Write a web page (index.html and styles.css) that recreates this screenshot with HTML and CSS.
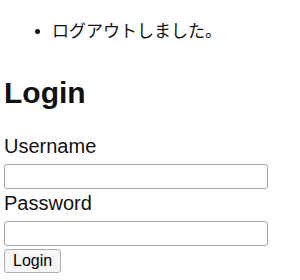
FILE: index.html
```html
<!DOCTYPE html>
<html lang="ja">
<head>
    <meta charset="UTF-8">
    <meta name="viewport" content="width=device-width, initial-scale=1.0">
    <title>Login</title>
    <link rel="stylesheet" href="styles.css">
</head>
<body>
    <ul class="messages">
        <li>ログアウトしました。</li>
    </ul>

    <h1>Login</h1>

    <form class="login-form" method="post" action="/login">
        <label for="username">Username</label>
        <input type="text" id="username" name="username">
        <label for="password">Password</label>
        <input type="password" id="password" name="password">
        <button type="submit">Login</button>
    </form>
</body>
</html>
```

FILE: styles.css
```css
body {
    font-family: 'Liberation Sans', 'Noto Sans CJK JP', sans-serif;
    margin: 0 4px;
    color: #111;
    background-color: #fff;
}
.messages {
    margin: 21px 0 0;
    padding-left: 48px;
    font-size: 17px;
    line-height: 21px;
}
h1 {
    font-size: 30px;
    line-height: 34px;
    margin: 34px 0 0;
}
.login-form {
    margin-top: 25px;
}
label {
    display: block;
    font-size: 20px;
    line-height: 23px;
}
input {
    display: block;
    box-sizing: border-box;
    width: 264px;
    height: 25px;
    margin: 6px 0 3px;
    border: 1px solid #a8a8a8;
    border-radius: 3px;
    background-color: #fff;
}
button {
    font-family: inherit;
    font-size: 16px;
    height: 24px;
    padding: 0 8px;
    margin: 0;
    border: 1px solid #b0b0b0;
    border-radius: 3px;
    background-color: #f6f6f6;
    color: #000;
}
```
